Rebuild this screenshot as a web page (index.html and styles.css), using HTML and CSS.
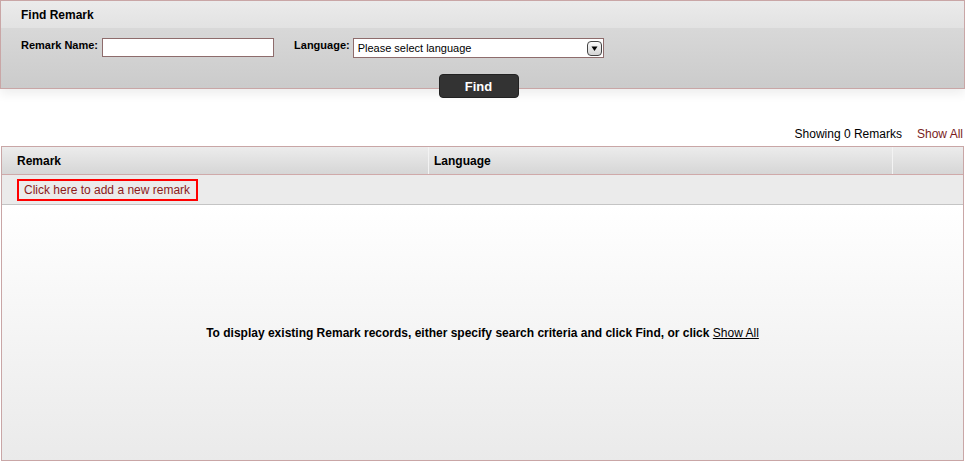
FILE: index.html
```html
<!DOCTYPE html>
<html>
<head>
<meta charset="utf-8">
<link rel="stylesheet" href="styles.css">
</head>
<body>
<div class="search-panel">
  <div class="panel-title">Find Remark</div>
  <div class="form-row">
    <label class="field-label">Remark Name:</label>
    <input class="text-input" type="text">
    <label class="field-label lang-label">Language:</label>
    <div class="select-box">
      <span class="select-text">Please select language</span>
      <span class="select-arrow"><svg width="11" height="11" viewBox="0 0 11 11"><path d="M2.5 3.5 L8.5 3.5 L5.5 8 Z" fill="#000"/></svg></span>
    </div>
  </div>
</div>
<div class="button-row"><button class="find-btn">Find</button></div>
<div class="status-row"><span class="count">Showing 0 Remarks</span><a class="show-all">Show All</a></div>
<div class="results">
  <div class="header-row">
    <div class="col col-remark">Remark</div>
    <div class="col col-lang">Language</div>
    <div class="col col-extra"></div>
  </div>
  <div class="add-row"><a class="add-link">Click here to add a new remark</a></div>
  <div class="empty-body">
    <p class="empty-msg">To display existing Remark records, either specify search criteria and click Find, or click <a class="msg-link">Show All</a></p>
  </div>
</div>
</body>
</html>
```
FILE: styles.css
```css
* { box-sizing: border-box; }
html, body { margin: 0; padding: 0; background: #fff; }
body {
  font-family: "Liberation Sans", Arial, sans-serif;
  font-size: 12px;
  color: #000;
  width: 965px;
  height: 461px;
  overflow: hidden;
}
.search-panel {
  height: 89px;
  border: 1px solid #c9a6a6;
  background: linear-gradient(#dedede, #cbcbcb);
  box-shadow: 0 5px 10px rgba(0,0,0,0.07);
}
.panel-title {
  height: 27px;
  padding: 7px 0 0 20px;
  font-weight: bold;
  font-size: 12px;
  background: linear-gradient(#ebebeb, #e2e2e2);
}
.form-row {
  display: flex;
  align-items: flex-start;
  padding: 10px 0 0 20px;
}
.field-label {
  font-weight: bold;
  font-size: 11px;
  padding-top: 1px;
  margin-right: 4px;
}
.text-input {
  width: 172px;
  height: 19px;
  border: 1px solid #8e6c6c;
  background: #fff;
  margin: 0;
  padding: 0;
}
.lang-label { margin-left: 20px; margin-right: 3px; }
.select-box {
  width: 251px;
  height: 20px;
  border: 1px solid #8e6c6c;
  background: #fff;
  display: flex;
  align-items: center;
  justify-content: space-between;
  padding: 0 1px 0 4px;
}
.select-text { font-size: 11px; }
.select-arrow {
  width: 15px;
  height: 15px;
  border: 1px solid #444;
  border-radius: 4px;
  background: linear-gradient(#fafafa, #d4d4d4);
  display: flex;
  align-items: center;
  justify-content: center;
}
.button-row {
  display: flex;
  justify-content: center;
  margin-top: -15px;
  padding-right: 8px;
  position: relative;
}
.find-btn {
  width: 80px;
  height: 24px;
  border: 1px solid #222;
  border-radius: 4px;
  background: #333;
  color: #fff;
  font-family: "Liberation Sans", Arial, sans-serif;
  font-weight: bold;
  font-size: 13px;
  padding: 0;
}
.status-row {
  display: flex;
  justify-content: flex-end;
  gap: 15px;
  padding: 29px 2px 0 0;
  height: 48px;
  line-height: 15px;
}
.show-all { color: #7a1c1c; }
.results {
  margin: 0 1px;
  height: 315px;
  border: 1px solid #c9a6a6;
  display: flex;
  flex-direction: column;
}
.header-row {
  display: flex;
  height: 28px;
  background: linear-gradient(#ececec, #d6d6d6);
  border-bottom: 1px solid #cfa9a9;
  font-weight: bold;
}
.col {
  display: flex;
  align-items: center;
  padding-left: 15px;
}
.col-remark { width: 427px; border-right: 1px solid #f3f3f3; }
.col-lang { width: 464px; padding-left: 5px; border-right: 1px solid #f3f3f3; }
.col-extra { flex: 1; }
.add-row {
  height: 30px;
  background: #ebebeb;
  border-bottom: 1px solid #c4c4c4;
  padding: 4px 0 0 15px;
}
.add-link {
  display: inline-block;
  height: 22px;
  width: 181px;
  border: 2px solid #ff0000;
  color: #8b1a1a;
  padding: 2px 0 0 5px;
  font-size: 12px;
}
.empty-body {
  flex: 1;
  background: linear-gradient(#ffffff, #eaeaea);
  display: flex;
  align-items: center;
  justify-content: center;
}
.empty-msg {
  margin: 0;
  font-weight: bold;
}
.msg-link {
  font-weight: normal;
  text-decoration: underline;
}
```
